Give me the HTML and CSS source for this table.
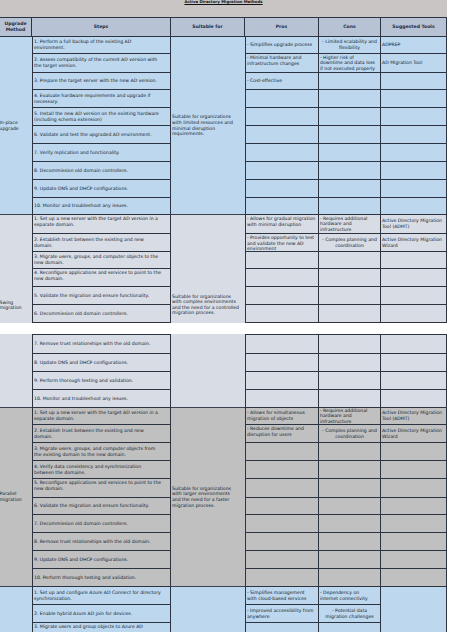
FILE: index.html
```html
<!DOCTYPE html>
<html lang="en">
<head>
<meta charset="utf-8">
<title>Active Directory Migration Methods</title>
<link rel="stylesheet" href="styles.css">
</head>
<body>
<div class="sheet">
  <div class="title"><span>Active Directory Migration Methods</span></div>

  <div class="hdr">
    <div class="hc"><span>Upgrade<br>Method</span></div>
    <div class="hc"><span>Steps</span></div>
    <div class="hc"><span>Suitable for</span></div>
    <div class="hc"><span>Pros</span></div>
    <div class="hc"><span>Cons</span></div>
    <div class="hc"><span>Suggested Tools</span></div>
  </div>

  <div class="sec s1">
    <div class="label"><span>In-place<br>upgrade</span></div>
    <div class="suit"><span>Suitable for organizations<br>with limited resources and<br>minimal disruption<br>requirements.</span></div>

    <div class="c step"><span>1. Perform a full backup of the existing AD<br>environment.</span></div>
    <div class="c pro"><span>- Simplifies upgrade process</span></div>
    <div class="c con mid"><span>- Limited scalability and<br>flexibility</span></div>
    <div class="c tool"><span>ADPREP</span></div>

    <div class="c step"><span>2. Assess compatibility of the current AD version with<br>the target version.</span></div>
    <div class="c pro high"><span>- Minimal hardware and<br>infrastructure changes</span></div>
    <div class="c con"><span>- Higher risk of<br>downtime and data loss<br>if not executed properly</span></div>
    <div class="c tool"><span>AD Migration Tool</span></div>

    <div class="c step"><span>3. Prepare the target server with the new AD version.</span></div>
    <div class="c pro"><span>- Cost-effective</span></div>
    <div class="c con"></div>
    <div class="c tool"></div>

    <div class="c step"><span>4. Evaluate hardware requirements and upgrade if<br>necessary.</span></div>
    <div class="c pro"></div><div class="c con"></div><div class="c tool"></div>

    <div class="c step"><span>5. Install the new AD version on the existing hardware<br>(including schema extension)</span></div>
    <div class="c pro"></div><div class="c con"></div><div class="c tool"></div>

    <div class="c step"><span>6. Validate and test the upgraded AD environment.</span></div>
    <div class="c pro"></div><div class="c con"></div><div class="c tool"></div>

    <div class="c step"><span>7. Verify replication and functionality.</span></div>
    <div class="c pro"></div><div class="c con"></div><div class="c tool"></div>

    <div class="c step"><span>8. Decommission old domain controllers.</span></div>
    <div class="c pro"></div><div class="c con"></div><div class="c tool"></div>

    <div class="c step"><span>9. Update DNS and DHCP configurations.</span></div>
    <div class="c pro"></div><div class="c con"></div><div class="c tool"></div>

    <div class="c step"><span>10. Monitor and troubleshoot any issues.</span></div>
    <div class="c pro"></div><div class="c con"></div><div class="c tool"></div>
  </div>

  <div class="sec s2a">
    <div class="label"><span>Swing<br>migration</span></div>
    <div class="suit"><span>Suitable for organizations<br>with complex environments<br>and the need for a controlled<br>migration process.</span></div>

    <div class="c step high"><span>1. Set up a new server with the target AD version in a<br>separate domain.</span></div>
    <div class="c pro high"><span>- Allows for gradual migration<br>with minimal disruption</span></div>
    <div class="c con"><span>- Requires additional<br>hardware and<br>infrastructure</span></div>
    <div class="c tool"><span>Active Directory Migration<br>Tool (ADMT)</span></div>

    <div class="c step"><span>2. Establish trust between the existing and new<br>domain.</span></div>
    <div class="c pro high"><span>- Provides opportunity to test<br>and validate the new AD<br>environment</span></div>
    <div class="c con mid"><span>- Complex planning and<br>coordination</span></div>
    <div class="c tool"><span>Active Directory Migration<br>Wizard</span></div>

    <div class="c step"><span>3. Migrate users, groups, and computer objects to the<br>new domain.</span></div>
    <div class="c pro"></div><div class="c con"></div><div class="c tool"></div>

    <div class="c step high"><span>4. Reconfigure applications and services to point to the<br>new domain.</span></div>
    <div class="c pro"></div><div class="c con"></div><div class="c tool"></div>

    <div class="c step"><span>5. Validate the migration and ensure functionality.</span></div>
    <div class="c pro"></div><div class="c con"></div><div class="c tool"></div>

    <div class="c step"><span>6. Decommission old domain controllers.</span></div>
    <div class="c pro"></div><div class="c con"></div><div class="c tool"></div>
  </div>

  <div class="gap"></div>

  <div class="sec s2b">
    <div class="label"></div>
    <div class="suit"></div>

    <div class="c step top"><span>7. Remove trust relationships with the old domain.</span></div>
    <div class="c pro top"></div><div class="c con top"></div><div class="c tool top"></div>

    <div class="c step"><span>8. Update DNS and DHCP configurations.</span></div>
    <div class="c pro"></div><div class="c con"></div><div class="c tool"></div>

    <div class="c step"><span>9. Perform thorough testing and validation.</span></div>
    <div class="c pro"></div><div class="c con"></div><div class="c tool"></div>

    <div class="c step"><span>10. Monitor and troubleshoot any issues.</span></div>
    <div class="c pro"></div><div class="c con"></div><div class="c tool"></div>
  </div>

  <div class="sec s3">
    <div class="label"><span>Parallel<br>migration</span></div>
    <div class="suit"><span>Suitable for organizations<br>with larger environments<br>and the need for a faster<br>migration process.</span></div>

    <div class="c step"><span>1. Set up a new server with the target AD version in a<br>separate domain.</span></div>
    <div class="c pro"><span>- Allows for simultaneous<br>migration of objects</span></div>
    <div class="c con"><span>- Requires additional<br>hardware and<br>infrastructure</span></div>
    <div class="c tool"><span>Active Directory Migration<br>Tool (ADMT)</span></div>

    <div class="c step"><span>2. Establish trust between the existing and new<br>domain.</span></div>
    <div class="c pro high"><span>- Reduces downtime and<br>disruption for users</span></div>
    <div class="c con mid"><span>- Complex planning and<br>coordination</span></div>
    <div class="c tool"><span>Active Directory Migration<br>Wizard</span></div>

    <div class="c step"><span>3. Migrate users, groups, and computer objects from<br>the existing domain to the new domain.</span></div>
    <div class="c pro"></div><div class="c con"></div><div class="c tool"></div>

    <div class="c step"><span>4. Verify data consistency and synchronization<br>between the domains.</span></div>
    <div class="c pro"></div><div class="c con"></div><div class="c tool"></div>

    <div class="c step high"><span>5. Reconfigure applications and services to point to the<br>new domain.</span></div>
    <div class="c pro"></div><div class="c con"></div><div class="c tool"></div>

    <div class="c step"><span>6. Validate the migration and ensure functionality.</span></div>
    <div class="c pro"></div><div class="c con"></div><div class="c tool"></div>

    <div class="c step"><span>7. Decommission old domain controllers.</span></div>
    <div class="c pro"></div><div class="c con"></div><div class="c tool"></div>

    <div class="c step"><span>8. Remove trust relationships with the old domain.</span></div>
    <div class="c pro"></div><div class="c con"></div><div class="c tool"></div>

    <div class="c step"><span>9. Update DNS and DHCP configurations.</span></div>
    <div class="c pro"></div><div class="c con"></div><div class="c tool"></div>

    <div class="c step"><span>10. Perform thorough testing and validation.</span></div>
    <div class="c pro"></div><div class="c con"></div><div class="c tool"></div>
  </div>

  <div class="sec s4">
    <div class="label"></div>
    <div class="suit"></div>
    <div class="toolspan"></div>

    <div class="c step"><span>1. Set up and configure Azure AD Connect for directory<br>synchronization.</span></div>
    <div class="c pro"><span>- Simplifies management<br>with cloud-based services</span></div>
    <div class="c con"><span>- Dependency on<br>internet connectivity</span></div>

    <div class="c step"><span>2. Enable hybrid Azure AD join for devices.</span></div>
    <div class="c pro"><span>- Improved accessibility from<br>anywhere</span></div>
    <div class="c con mid"><span>- Potential data<br>migration challenges</span></div>

    <div class="c step high"><span>3. Migrate users and group objects to Azure AD</span></div>
    <div class="c pro"></div>
    <div class="c con"></div>
  </div>
</div>
</body>
</html>
```

FILE: styles.css
```css
* {
  box-sizing: border-box;
}

html,
body {
  margin: 0;
  height: 632px;
  overflow: hidden;
  background: #ffffff;
}

body {
  font-family: "DejaVu Sans", "Liberation Sans", sans-serif;
  font-size: 4.6px;
  line-height: 5.6px;
  color: #121a2a;
}

.sheet {
  width: 447px;
}

.title {
  height: 17px;
  background: #c8c5c4;
  text-align: center;
  font-weight: bold;
  font-size: 3.9px;
  line-height: 4px;
  color: #111111;
}

.title span {
  text-decoration: underline;
}

.hdr,
.sec {
  display: grid;
  grid-template-columns: 32px 139px 74px 74px 62px 66px;
}

.hdr {
  height: 20px;
  background: #b7c3d4;
  border-top: 1px solid #2c3441;
  border-bottom: 1px solid #2c3441;
}

.hc {
  display: flex;
  align-items: center;
  justify-content: center;
  text-align: center;
  font-weight: bold;
  color: #1d2a44;
  border-right: 1px solid #2c3441;
}

.s1 {
  background: #bdd7ee;
  grid-template-rows: 17px 19px 17px 18px 18px 18px 18px 18px 18px 17px;
}

.s2a {
  background: #d8dce5;
  grid-template-rows: 19px 18px 17px 18px 18px 18px;
}

.gap {
  height: 11px;
}

.s2b {
  background: #d8dce5;
  grid-template-rows: 20px 18px 18px 18px;
}

.s3 {
  background: #c0c0c0;
  grid-template-rows: 17px 18px 18px 18px 19px 17px 18px 18px 18px 18px;
}

.s4 {
  background: #bdd7ee;
  grid-template-rows: 18px 18px 18px;
}

.label {
  grid-column: 1;
  grid-row: 1 / -1;
  display: flex;
  align-items: center;
  margin-left: -0.5px;
  border-bottom: 1px solid #3a4150;
}

.suit {
  grid-column: 3;
  grid-row: 1 / -1;
  display: flex;
  align-items: center;
  padding-left: 1px;
  white-space: nowrap;
  border-bottom: 1px solid #3a4150;
}

.s2a .label {
  align-items: flex-end;
  padding-bottom: 12px;
  border-bottom: 0;
}

.s2a .suit {
  align-items: flex-end;
  padding-bottom: 7px;
  border-bottom: 0;
}

.s4 .label,
.s4 .suit {
  border-bottom: 0;
}

.toolspan {
  grid-column: 6;
  grid-row: 1 / -1;
  border-right: 1px solid #2c3441;
}

.c {
  display: flex;
  align-items: center;
  padding: 0 1px;
  white-space: nowrap;
  border-bottom: 1px solid #2c3441;
}

.c.high {
  align-items: flex-start;
  padding-top: 1px;
}

.step {
  border-left: 1px solid #2c3441;
  border-right: 1px solid #2c3441;
}

.pro {
  border-left: 1px solid #2c3441;
  border-right: 1px solid #2c3441;
}

.con,
.tool {
  border-right: 1px solid #2c3441;
}

.mid {
  justify-content: center;
  text-align: center;
}

.top {
  border-top: 1px solid #2c3441;
}
```
